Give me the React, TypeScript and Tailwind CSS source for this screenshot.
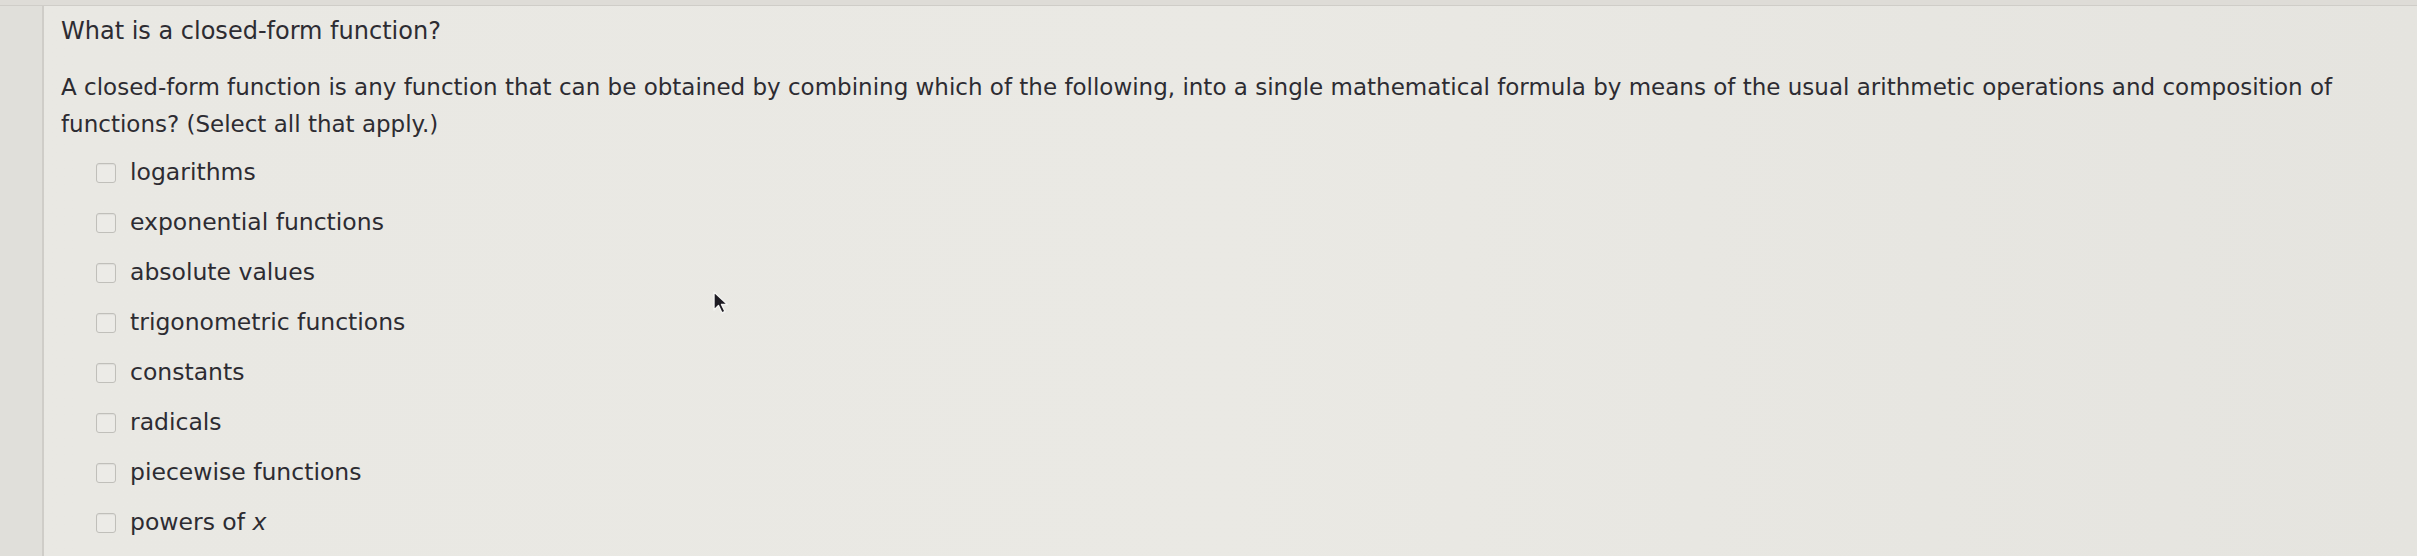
const options = [
  'logarithms',
  'exponential functions',
  'absolute values',
  'trigonometric functions',
  'constants',
  'radicals',
  'piecewise functions',
];

function Checkbox() {
  return (
    <span className="inline-block h-[20px] w-[20px] shrink-0 rounded-[3px] border-[1.5px] border-[#c0bfba] bg-[#ecebe7] shadow-[inset_0_1px_1px_rgba(0,0,0,0.06)]" />
  );
}

function Cursor() {
  return (
    <svg
      className="absolute left-[712px] top-[290px]"
      width="18"
      height="26"
      viewBox="0 0 18 26"
    >
      <path
        d="M2 2 L2 20 L6.5 15.5 L10 23 L13 21.5 L9.5 14.5 L15.5 14.5 Z"
        fill="#1d1b22"
        stroke="#f4f4f2"
        strokeWidth="1.4"
        strokeLinejoin="round"
      />
    </svg>
  );
}

export default function App() {
  return (
    <div
      className="relative h-[556px] w-full overflow-hidden bg-[#dedcd7] pt-[5px] text-[#2d2c32]"
      style={{ fontFamily: '"DejaVu Sans", Verdana, sans-serif' }}
    >
      <div className="flex h-full border-t border-[#cfcdc8]">
        <div className="w-[44px] shrink-0 border-r-2 border-[#cfcdc8] bg-[#e0dfda]" />
        <div className="flex-1 bg-gradient-to-r from-[#e9e8e3] via-[#eae9e4] to-[#e5e4df] pl-[17px] pt-[11px]">
          <h1 className="text-[24px] leading-[28px]">What is a closed-form function?</h1>
          <p className="mt-[24px] w-[2300px] text-[23px] leading-[37px]">
            A closed-form function is any function that can be obtained by combining which of the following, into a single
            mathematical formula by means of the usual arithmetic operations and composition of functions? (Select all that
            apply.)
          </p>
          <ul className="mt-[5px] pl-[35px]">
            {options.map((o) => (
              <li key={o} className="flex h-[50px] items-center gap-[14px] text-[23.5px]">
                <Checkbox />
                <span>{o}</span>
              </li>
            ))}
            <li className="flex h-[50px] items-center gap-[14px] text-[23.5px]">
              <Checkbox />
              <span>
                powers of <i>x</i>
              </span>
            </li>
          </ul>
        </div>
      </div>
      <Cursor />
    </div>
  );
}
